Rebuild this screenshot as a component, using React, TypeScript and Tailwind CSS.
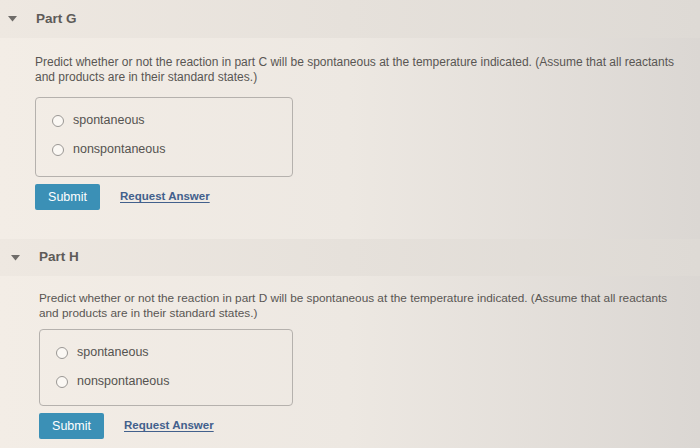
import React from "react";

const OPTIONS = ["spontaneous", "nonspontaneous"];

function Caret() {
  return (
    <svg width="9" height="6" viewBox="0 0 9 6" className="shrink-0">
      <path d="M0 0 L9 0 L4.5 5.5 Z" fill="#6f6c69" />
    </svg>
  );
}

function Radio({ label }: { label: string }) {
  return (
    <label className="flex h-[29px] items-center gap-[9px]">
      <span className="h-[12px] w-[12px] rounded-full border border-[#9a9794] bg-[#fbf8f4]" />
      <span className="text-[12.5px] text-[#555350]">{label}</span>
    </label>
  );
}

function Part({
  name,
  letter,
  first,
}: {
  name: string;
  letter: string;
  first?: boolean;
}) {
  const prompt = `Predict whether or not the reaction in part ${letter} will be spontaneous at the temperature indicated. (Assume that all reactants and products are in their standard states.)`;

  return (
    <section className={first ? "" : "mt-[29px]"}>
      {/* Header */}
      <div
        className={`flex items-center gap-[19px] bg-gradient-to-r from-[#eee8e1] to-[#dedad5] ${
          first ? "h-[38px] pl-[8px]" : "h-[37px] pl-[11px]"
        }`}
      >
        <Caret />
        <h3 className="text-[13.5px] font-bold text-[#5e5b58]">{name}</h3>
      </div>

      {/* Body */}
      <div className={first ? "pl-[35px] pt-[17px]" : "pl-[39px] pt-[15px]"}>
        <p
          className={`leading-[15px] text-[#595653] ${
            first ? "max-w-[650px] text-[12px]" : "max-w-[635px] text-[11.8px]"
          }`}
        >
          {prompt}
        </p>

        <div
          className={`flex flex-col rounded-[4px] border border-[#b5b1ad] pl-[16px] pt-[8px] ${
            first ? "mt-[12px] h-[80px] w-[258px]" : "mt-[8px] h-[77px] w-[254px]"
          }`}
        >
          {OPTIONS.map((o) => (
            <Radio key={o} label={o} />
          ))}
        </div>

        <div className="mt-[7px] flex items-center gap-[20px]">
          <button className="h-[26px] w-[65px] rounded-[2px] bg-[#3b90b6] text-[12.5px] text-white">
            Submit
          </button>
          <a className="text-[11.5px] font-bold text-[#42608c] underline underline-offset-2">
            Request Answer
          </a>
        </div>
      </div>
    </section>
  );
}

export default function App() {
  return (
    <div
      className="h-[448px] w-[700px] overflow-hidden bg-gradient-to-r from-[#f3ede6] via-[#ede8e2] to-[#dbd7d3]"
      style={{ fontFamily: '"Liberation Sans", Arial, sans-serif' }}
    >
      <Part name="Part G" letter="C" first />
      <Part name="Part H" letter="D" />
    </div>
  );
}
